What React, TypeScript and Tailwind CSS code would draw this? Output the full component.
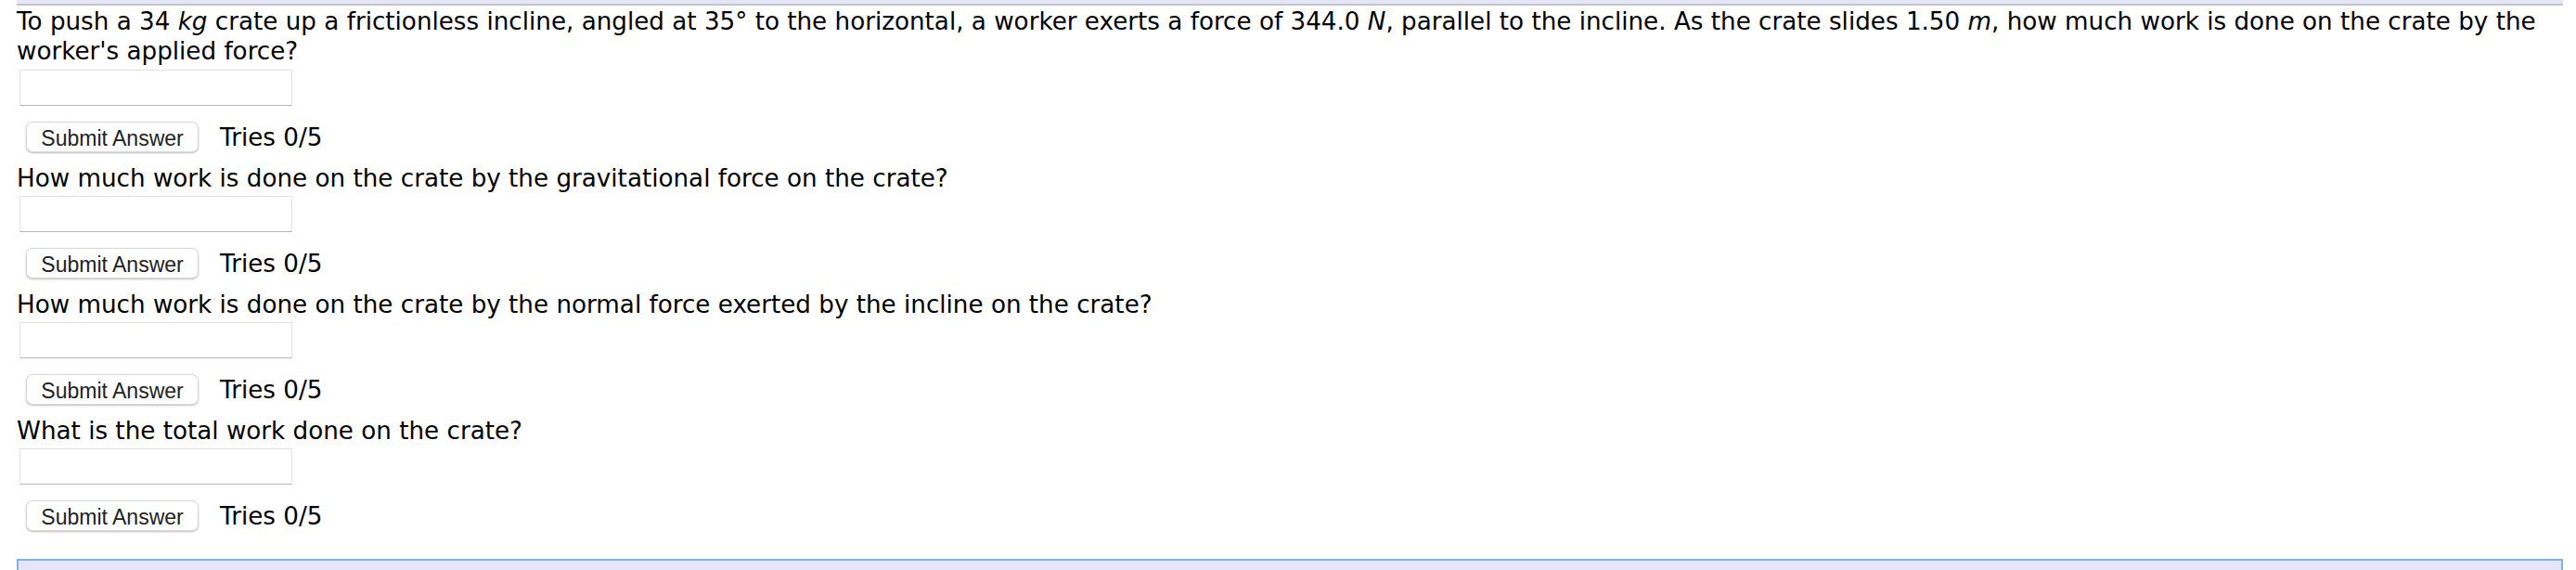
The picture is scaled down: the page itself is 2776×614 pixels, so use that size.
const q = "font-['DejaVu_Sans',Verdana,sans-serif] text-[26.2px] leading-[32px] text-black";

function AnswerRow() {
  return (
    <div className="mt-[17px] flex items-center pl-[10px]">
      <button
        type="button"
        className="h-[33px] w-[186px] rounded-[7px] border border-[#d6d6d6] bg-white font-['Liberation_Sans',Arial,sans-serif] text-[23px] text-[#222] shadow-[0_1px_2px_rgba(0,0,0,0.25)]"
      >
        Submit Answer
      </button>
      <span className={`ml-[23px] ${q}`}>Tries 0/5</span>
    </div>
  );
}

function Input({ first = false }: { first?: boolean }) {
  return (
    <div
      className={`${first ? 'mt-[4px]' : 'mt-[3px]'} ml-[3px] h-[39px] w-[294px] border border-[#e4e4e4] border-b-[#b9b9b9] bg-white`}
    />
  );
}

export default function App() {
  return (
    <div className="min-h-[614px] w-[2776px] bg-white pl-[18px] pr-[14px]">
      <div className="h-[6px] border-b-2 border-[#c4c4c4] bg-[#e6e6fa]" />
      <div className={`mt-[1px] ${q}`}>
        To push a 34 <i>kg</i> crate up a frictionless incline, angled at 35° to the horizontal, a worker exerts a
        force of 344.0 <i>N</i>, parallel to the incline. As the crate slides 1.50 <i>m</i>, how much work is done on
        the crate by the worker's applied force?
      </div>
      <Input first />
      <AnswerRow />
      <div className={`mt-[12px] ${q}`}>How much work is done on the crate by the gravitational force on the crate?</div>
      <Input />
      <AnswerRow />
      <div className={`mt-[12px] ${q}`}>
        How much work is done on the crate by the normal force exerted by the incline on the crate?
      </div>
      <Input />
      <AnswerRow />
      <div className={`mt-[12px] ${q}`}>What is the total work done on the crate?</div>
      <Input />
      <AnswerRow />
      <div className="mt-[30px] h-[20px] border-2 border-b-0 border-[#80b0f0] bg-[#e6e6fa]" />
    </div>
  );
}
